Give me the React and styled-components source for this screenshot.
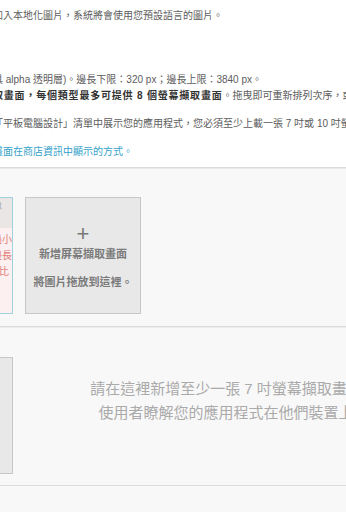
import styled, { createGlobalStyle } from 'styled-components';

const GlobalStyle = createGlobalStyle`
  html, body {
    margin: 0;
    padding: 0;
    background: #f8f8f8;
    overflow: hidden;
  }
  body {
    font-family: "Liberation Sans", "Noto Sans CJK TC", sans-serif;
  }
`;

const Page = styled.div`
  width: 592px;
  margin-left: -120px;
  min-height: 512px;
  background: #f8f8f8;
`;

const Intro = styled.div`
  background: #fff;
  padding: 8px 0 7px 113px;
  font-size: 10px;
  line-height: 16px;
  color: #5c5c5c;
`;

const Para = styled.p`
  margin: ${(p) => p.$gap || 0}px 0 0;
  white-space: nowrap;
  overflow: hidden;
`;

const Strong = styled.b`
  color: #333;
  font-weight: bold;
  letter-spacing: 0.8px;
`;

const Link = styled.span`
  color: #34a2c8;
`;

const Section = styled.div`
  border-top: 1px solid #dcdcdc;
  box-shadow: inset 0 1px 0 #ebebeb;
  background: #f8f8f8;
  padding: ${(p) => p.$top}px 0 ${(p) => p.$bottom}px 17px;
  display: flex;
  align-items: flex-start;
  gap: 12px;
`;

const Card = styled.div`
  box-sizing: border-box;
  width: 116px;
  height: 117px;
  flex-shrink: 0;
  border: 1px solid #c6c6c6;
  background: #e8e8e8;
`;

const ErrorCard = styled(Card)`
  border-color: #9fd2dd;
  background: #fcf0f0;
  display: flex;
  flex-direction: column;
`;

const ErrorHead = styled.div`
  height: 30px;
  background: #ebe6e6;
  font-size: 10px;
  line-height: 16px;
  color: #999;
  text-align: right;
  padding-right: 10px;
`;

const ErrorText = styled.div`
  font-size: 10px;
  line-height: 16px;
  color: #e27b7b;
  text-align: right;
  padding: 4px 0 0;
`;

const ErrorLine = styled.div`
  padding-right: ${(p) => p.$pr || 0}px;
`;

const AddCard = styled(Card)`
  display: flex;
  flex-direction: column;
  align-items: center;
  color: #7a7a7a;
  font-size: 11px;
  font-weight: bold;
  line-height: 16px;
  text-align: center;
  padding-top: 25px;
`;

const Plus = styled.div`
  font-size: 22px;
  font-weight: 300;
  line-height: 22px;
  color: #777;
  font-family: "Liberation Sans", sans-serif;
`;

const AddLabel = styled.div`
  margin-top: ${(p) => p.$gap || 0}px;
`;

const Hint = styled.div`
  flex: 1;
  padding-top: 20px;
  font-size: 15px;
  line-height: 24px;
  color: #aaa;
  text-align: center;
  white-space: nowrap;
`;

export default function App() {
  return (
    <>
      <GlobalStyle />
      <Page>
        <Intro>
          <Para>加入本地化圖片，系統將會使用您預設語言的圖片。</Para>
          <Para $gap={48}>具 alpha 透明層)。邊長下限：320 px；邊長上限：3840 px。</Para>
          <Para>
            <Strong>取畫面，每個類型最多可提供 8 個螢幕擷取畫面</Strong>。拖曳即可重新排列次序，或將畫面移到其他類型。
          </Para>
          <Para $gap={12}>「平板電腦設計」清單中展示您的應用程式，您必須至少上載一張 7 吋或 10 吋螢幕擷取畫面。</Para>
          <Para $gap={12}>
            <Link>畫面在商店資訊中顯示的方式。</Link>
          </Para>
        </Intro>

        <Section $top={29} $bottom={12}>
          <ErrorCard>
            <ErrorHead>截圖像</ErrorHead>
            <ErrorText>
              <ErrorLine>圖片尺寸過小</ErrorLine>
              <ErrorLine>最短邊長</ErrorLine>
              <ErrorLine $pr={3}>長寬比</ErrorLine>
            </ErrorText>
          </ErrorCard>
          <AddCard>
            <Plus>+</Plus>
            <AddLabel $gap={1}>新增屏幕擷取畫面</AddLabel>
            <AddLabel $gap={12}>將圖片拖放到這裡。</AddLabel>
          </AddCard>
        </Section>

        <Section $top={30} $bottom={11}>
          <Card />
          <Hint>
            請在這裡新增至少一張 7 吋螢幕擷取畫面，協助
            <br />
            使用者瞭解您的應用程式在他們裝置上的外觀
          </Hint>
        </Section>

        <Section $top={0} $bottom={0} />
      </Page>
    </>
  );
}
